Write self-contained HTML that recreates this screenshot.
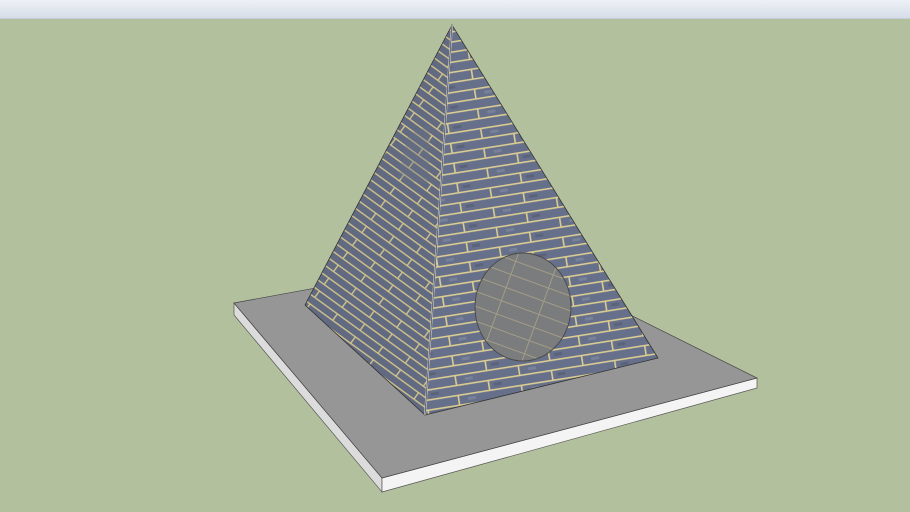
<!DOCTYPE html><html><head><style>
html,body{margin:0;padding:0;width:910px;height:512px;overflow:hidden;background:#b3c09d}
.top{position:absolute;left:0;top:0;width:910px;height:18px;background:linear-gradient(#eef1f6,#d6dde8);border-bottom:1px solid #c5cdd8}
svg{position:absolute;left:0;top:0}
</style></head><body>
<div class="top"></div>
<svg width="910" height="512" viewBox="0 0 910 512">
<defs>
<pattern id="pr" width="64" height="20" patternUnits="userSpaceOnUse" patternTransform="rotate(-9 425 415)">
<rect width="64" height="20" fill="#67708b"/>
<rect y="0" width="64" height="1.6" fill="#d9cc92"/>
<rect x="12" y="0" width="1.6" height="10" fill="#d9cc92"/>
<rect x="0" y="10" width="64" height="1.6" fill="#d9cc92"/>
<rect x="44" y="10" width="1.6" height="10" fill="#d9cc92"/>
<rect x="22" y="4" width="8" height="3" fill="#8a92a9" opacity=".5"/>
<rect x="50" y="14" width="8" height="3" fill="#4d556b" opacity=".5"/>
</pattern>
<pattern id="pl" width="56" height="16" patternUnits="userSpaceOnUse" patternTransform="rotate(36 425 415)">
<rect width="56" height="16" fill="#626a82"/>
<rect y="0" width="56" height="1.4" fill="#cfc38a"/>
<rect x="14" y="0" width="1.4" height="8" fill="#cfc38a"/>
<rect x="0" y="8" width="56" height="1.4" fill="#cfc38a"/>
<rect x="42" y="8" width="1.4" height="8" fill="#cfc38a"/>
</pattern>
<pattern id="pc" width="40" height="14" patternUnits="userSpaceOnUse" patternTransform="rotate(20 523 307)">
<rect width="40" height="14" fill="#7b7c7e"/>
<rect width="40" height="1" fill="#a39d86"/>
<rect x="20" width="1" height="14" fill="#a39d86"/>
</pattern>
</defs>
<polygon points="234,303 382,478 382,492 234,315" fill="#dcdcdc" stroke="#555" stroke-width="0.7"/>
<polygon points="382,478 757,378 757,388 382,492" fill="#f4f4f4" stroke="#555" stroke-width="0.7"/>
<polygon points="234,303 506,253 757,378 382,478" fill="#969696" stroke="#444" stroke-width="0.7"/>
<polygon points="452,25 305,305 425,415" fill="url(#pl)" stroke="#333" stroke-width="0.8"/>
<polygon points="452,25 425,415 658,358" fill="url(#pr)" stroke="#333" stroke-width="0.8"/>
<polygon points="408,135 430,125 428,185 398,178" fill="#6b7185" opacity="0.35"/>
<ellipse cx="523" cy="307" rx="48" ry="54" fill="url(#pc)" stroke="#4a4a4a" stroke-width="1"/>
<line x1="452" y1="25" x2="425" y2="415" stroke="#c8c8c8" stroke-width="2"/>
<line x1="452" y1="25" x2="425" y2="415" stroke="#333" stroke-width="0.6"/>
</svg>
</body></html>
